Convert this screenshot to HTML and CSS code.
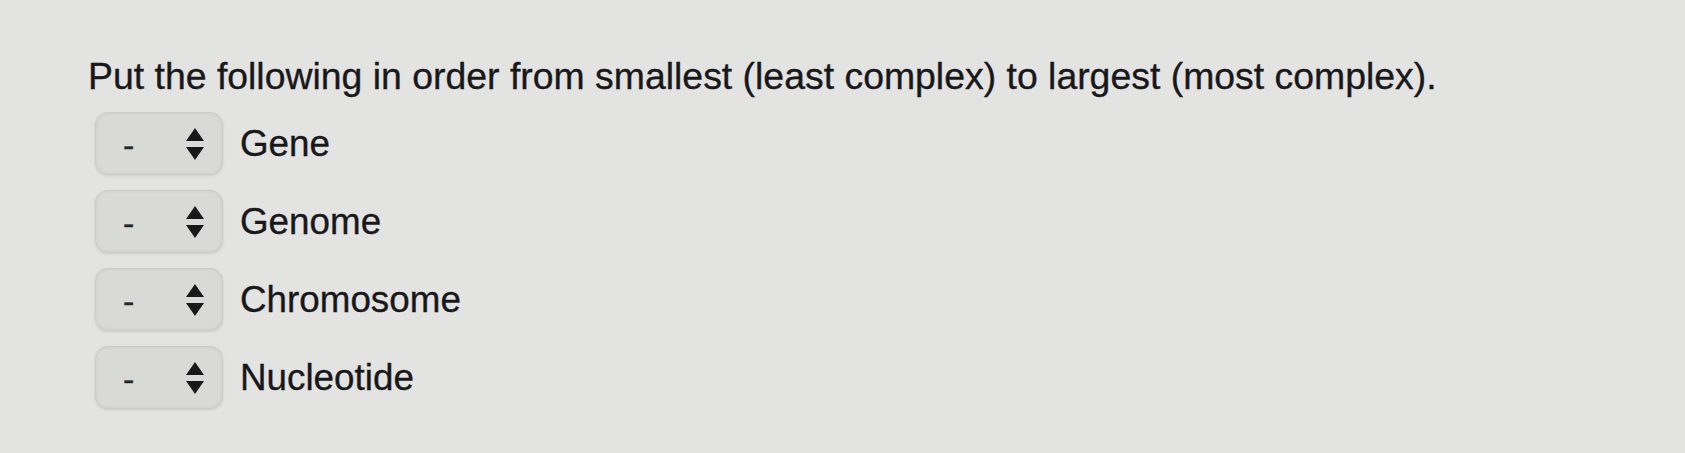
FILE: index.html
```html
<!DOCTYPE html>
<html lang="en">
<head>
<meta charset="utf-8">
<title>Ordering question</title>
<link rel="stylesheet" href="styles.css">
</head>
<body>
<main class="question">
  <p class="prompt">Put the following in order from smallest (least complex) to largest (most complex).</p>
  <ul class="items">
    <li class="item">
      <span class="picker"><span class="picker-value">-</span>
        <svg class="picker-arrows" viewBox="0 0 18 32" aria-hidden="true"><path d="M9 0 L18 13 L0 13 Z"/><path d="M0 19 L18 19 L9 32 Z"/></svg>
      </span>
      <span class="label">Gene</span>
    </li>
    <li class="item">
      <span class="picker"><span class="picker-value">-</span>
        <svg class="picker-arrows" viewBox="0 0 18 32" aria-hidden="true"><path d="M9 0 L18 13 L0 13 Z"/><path d="M0 19 L18 19 L9 32 Z"/></svg>
      </span>
      <span class="label">Genome</span>
    </li>
    <li class="item">
      <span class="picker"><span class="picker-value">-</span>
        <svg class="picker-arrows" viewBox="0 0 18 32" aria-hidden="true"><path d="M9 0 L18 13 L0 13 Z"/><path d="M0 19 L18 19 L9 32 Z"/></svg>
      </span>
      <span class="label">Chromosome</span>
    </li>
    <li class="item">
      <span class="picker"><span class="picker-value">-</span>
        <svg class="picker-arrows" viewBox="0 0 18 32" aria-hidden="true"><path d="M9 0 L18 13 L0 13 Z"/><path d="M0 19 L18 19 L9 32 Z"/></svg>
      </span>
      <span class="label">Nucleotide</span>
    </li>
  </ul>
</main>
</body>
</html>
```
FILE: styles.css
```css
html, body {
  margin: 0;
  padding: 0;
}

body {
  width: 1685px;
  height: 453px;
  overflow: hidden;
  background: #e3e3e1;
  font-family: "Liberation Sans", Arial, sans-serif;
  color: #18181b;
}

.question {
  padding: 55px 0 0 88px;
}

.prompt {
  margin: 0;
  font-size: 37.4px;
  line-height: 43px;
  -webkit-text-stroke: 0.35px #18181b;
}

.items {
  list-style: none;
  margin: 14px 0 0 7px;
  padding: 0;
  display: flex;
  flex-direction: column;
  gap: 15px;
}

.item {
  display: flex;
  align-items: center;
  gap: 17px;
}

.picker {
  box-sizing: border-box;
  width: 128px;
  height: 63px;
  border-radius: 13px;
  background: #d9d9d7;
  border: 1px solid #cbcbc9;
  box-shadow: 0 1px 3px rgba(0, 0, 0, 0.10), inset 0 0 4px rgba(0, 0, 0, 0.06);
  display: flex;
  align-items: center;
  justify-content: space-between;
  padding: 0 18px 0 27px;
}

.picker-value {
  font-size: 34px;
  line-height: 1;
  color: #26262a;
  -webkit-text-stroke: 0.4px #26262a;
  position: relative;
  top: 1px;
}

.picker-arrows {
  width: 18px;
  height: 32px;
  fill: #18181b;
}

.label {
  font-size: 36.8px;
  line-height: 42px;
  -webkit-text-stroke: 0.35px #18181b;
}
```
